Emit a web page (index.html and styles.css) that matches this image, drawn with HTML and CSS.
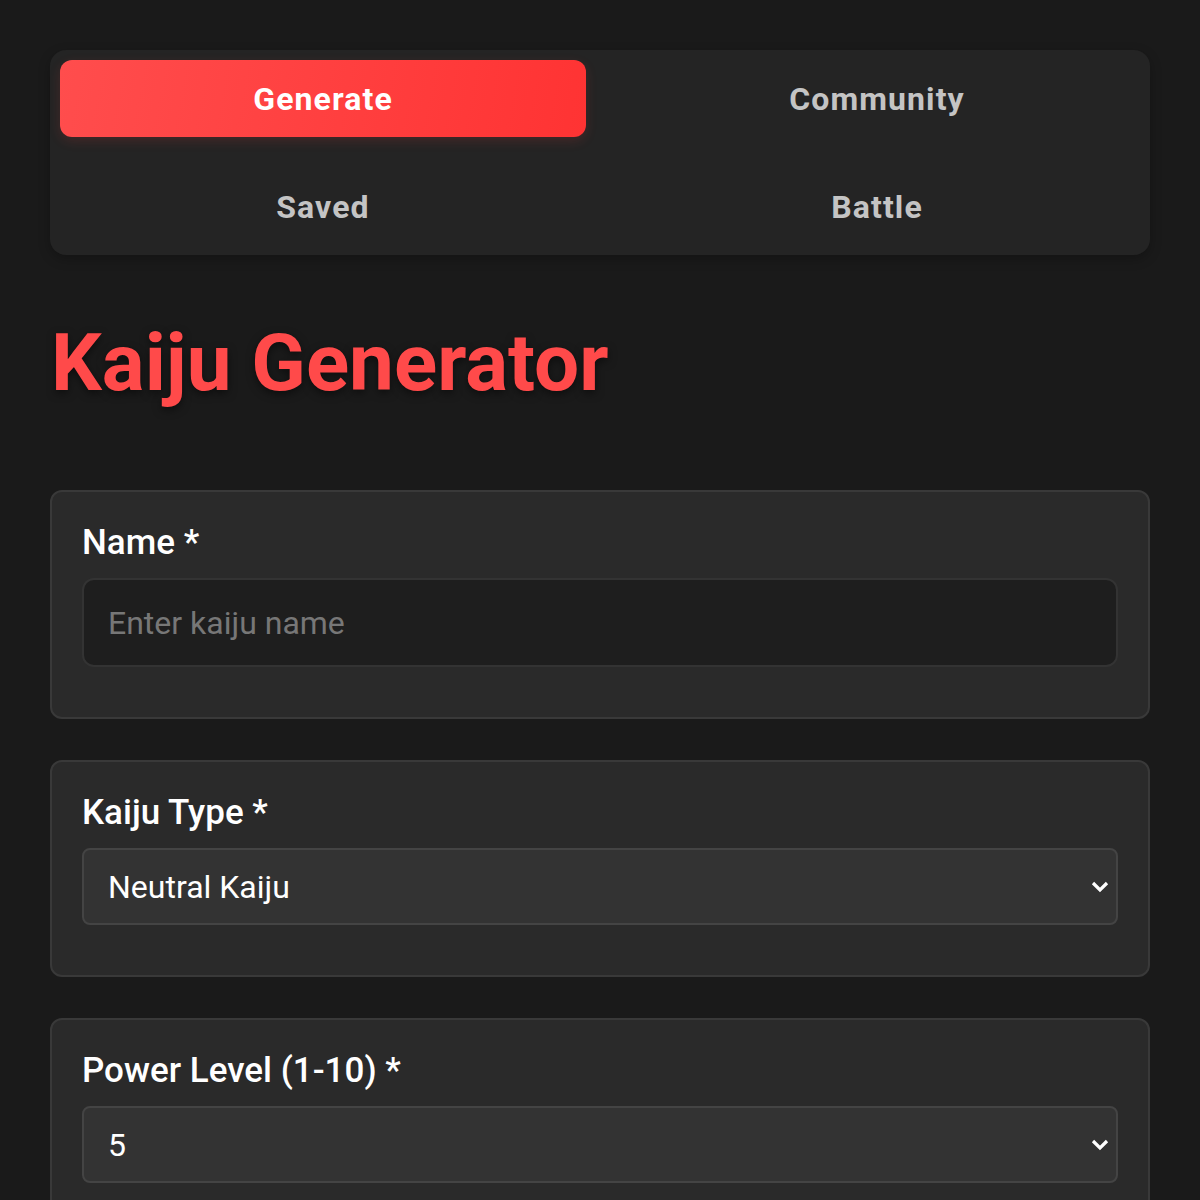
FILE: index.html
```html
<!DOCTYPE html>
<html lang="en">
<head>
<meta charset="utf-8">
<title>Kaiju Generator</title>
<link rel="stylesheet" href="styles.css">
</head>
<body>
<div class="container">
  <nav class="tabs">
    <button class="tab active">Generate</button>
    <button class="tab">Community</button>
    <button class="tab">Saved</button>
    <button class="tab">Battle</button>
  </nav>
  <h1 class="title">Kaiju Generator</h1>
  <div class="card">
    <label class="label" for="name">Name *</label>
    <input id="name" class="input" type="text" placeholder="Enter kaiju name">
  </div>
  <div class="card">
    <label class="label" for="type">Kaiju Type *</label>
    <select id="type" class="select">
      <option>Neutral Kaiju</option>
    </select>
  </div>
  <div class="card">
    <label class="label" for="power">Power Level (1-10) *</label>
    <select id="power" class="select">
      <option>5</option>
    </select>
  </div>
</div>
</body>
</html>
```
FILE: styles.css
```css
* { box-sizing: border-box; }
html, body { margin: 0; padding: 0; }
body {
  background: #1a1a1a;
  font-family: Roboto, "Liberation Sans", sans-serif;
  color: #ffffff;
}
.container {
  width: 1100px;
  margin: 0 auto;
  padding-top: 50px;
}
.tabs {
  display: grid;
  grid-template-columns: 1fr 1fr;
  column-gap: 28px;
  row-gap: 31px;
  padding: 10px;
  background: #242424;
  border-radius: 16px;
  box-shadow: 0 4px 12px rgba(0,0,0,0.25);
}
.tab {
  height: 77px;
  border: none;
  border-radius: 12px;
  background: transparent;
  color: #c4c4c4;
  font-family: Roboto, "Liberation Sans", sans-serif;
  font-weight: 700;
  font-size: 32px;
  letter-spacing: 1.1px;
  cursor: pointer;
}
.tab.active {
  background: linear-gradient(100deg, #ff4d4d 0%, #ff3333 100%);
  color: #ffffff;
  box-shadow: 0 4px 12px rgba(255, 60, 60, 0.15);
}
.title {
  margin: 60px 0 79px 1px;
  font-size: 80px;
  line-height: 96px;
  font-weight: 700;
  color: #ff4a4a;
  text-shadow: 0 3px 8px rgba(0,0,0,0.5);
}
.card {
  background: #2a2a2a;
  border: 2px solid #393939;
  border-radius: 12px;
  padding: 32px 30px 50px;
  margin-bottom: 41px;
}
.label {
  display: block;
  font-size: 35px;
  line-height: 38px;
  font-weight: 500;
  color: #ffffff;
  margin-bottom: 16px;
}
.input {
  display: block;
  width: 100%;
  height: 89px;
  padding: 0 24px;
  background: #1e1e1e;
  border: 2px solid #333333;
  border-radius: 12px;
  color: #ffffff;
  font-family: Roboto, "Liberation Sans", sans-serif;
  font-size: 32px;
  outline: none;
}
.input::placeholder { color: #777777; }
.select {
  display: block;
  width: 100%;
  height: 77px;
  padding: 0 60px 0 24px;
  background: #333333 url("data:image/svg+xml,%3Csvg xmlns='http://www.w3.org/2000/svg' width='20' height='14' viewBox='0 0 20 14'%3E%3Cpath d='M3 3l7 7 7-7' fill='none' stroke='%23ffffff' stroke-width='3.2'/%3E%3C/svg%3E") no-repeat right 6px center;
  border: 2px solid #444444;
  border-radius: 8px;
  color: #ffffff;
  font-family: Roboto, "Liberation Sans", sans-serif;
  font-size: 32px;
  appearance: none;
  -webkit-appearance: none;
  outline: none;
}
```
